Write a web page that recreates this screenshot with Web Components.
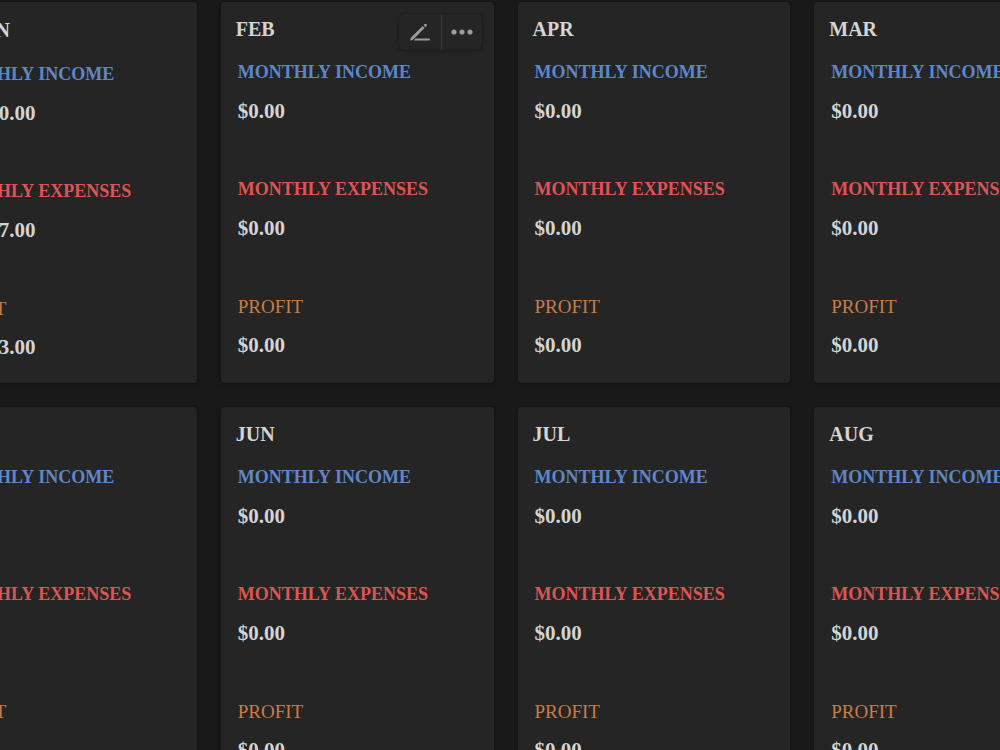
<!DOCTYPE html>
<html lang="en">
<head>
<meta charset="utf-8">
<meta name="viewport" content="width=device-width, initial-scale=1">
<title>Monthly budget</title>
<style>
body {
  margin: 0;
  background: #191919;
  color: #d4d4d4;
  font-family: "Liberation Serif", serif;
}
</style>
</head>
<body>
<budget-board>
  <month-card name="JAN">
    <month-icon slot="icon"></month-icon>
    <month-amount label="MONTHLY INCOME" tone="income">$30,000.00</month-amount>
    <month-amount label="MONTHLY EXPENSES" tone="expenses">$17,007.00</month-amount>
    <month-amount label="PROFIT" tone="profit">$12,993.00</month-amount>
  </month-card>
  <month-card name="FEB">
    <card-actions slot="actions"></card-actions>
    <month-amount label="MONTHLY INCOME" tone="income">$0.00</month-amount>
    <month-amount label="MONTHLY EXPENSES" tone="expenses">$0.00</month-amount>
    <month-amount label="PROFIT" tone="profit">$0.00</month-amount>
  </month-card>
  <month-card name="APR">
    <month-amount label="MONTHLY INCOME" tone="income">$0.00</month-amount>
    <month-amount label="MONTHLY EXPENSES" tone="expenses">$0.00</month-amount>
    <month-amount label="PROFIT" tone="profit">$0.00</month-amount>
  </month-card>
  <month-card name="MAR">
    <month-amount label="MONTHLY INCOME" tone="income">$0.00</month-amount>
    <month-amount label="MONTHLY EXPENSES" tone="expenses">$0.00</month-amount>
    <month-amount label="PROFIT" tone="profit">$0.00</month-amount>
  </month-card>
  <month-card name="MAY">
    <month-amount label="MONTHLY INCOME" tone="income">$0.00</month-amount>
    <month-amount label="MONTHLY EXPENSES" tone="expenses">$0.00</month-amount>
    <month-amount label="PROFIT" tone="profit">$0.00</month-amount>
  </month-card>
  <month-card name="JUN">
    <month-amount label="MONTHLY INCOME" tone="income">$0.00</month-amount>
    <month-amount label="MONTHLY EXPENSES" tone="expenses">$0.00</month-amount>
    <month-amount label="PROFIT" tone="profit">$0.00</month-amount>
  </month-card>
  <month-card name="JUL">
    <month-amount label="MONTHLY INCOME" tone="income">$0.00</month-amount>
    <month-amount label="MONTHLY EXPENSES" tone="expenses">$0.00</month-amount>
    <month-amount label="PROFIT" tone="profit">$0.00</month-amount>
  </month-card>
  <month-card name="AUG">
    <month-amount label="MONTHLY INCOME" tone="income">$0.00</month-amount>
    <month-amount label="MONTHLY EXPENSES" tone="expenses">$0.00</month-amount>
    <month-amount label="PROFIT" tone="profit">$0.00</month-amount>
  </month-card>
</budget-board>

<script>
class BudgetBoard extends HTMLElement {
  constructor() {
    super();
    this.attachShadow({ mode: "open" });
  }

  connectedCallback() {
    this.shadowRoot.innerHTML = `<style>
:host {
  display: block;
  height: 100vh;
  overflow: hidden;
}
/* the gallery is wider than the window on both sides */
.gallery {
  display: grid;
  grid-template-columns: repeat(4, minmax(0, 1fr));
  gap: 24px;
  margin: 2px -87px 0 -76px;
}
</style>
<div class="gallery"><slot></slot></div>`;
  }
}

class MonthCard extends HTMLElement {
  constructor() {
    super();
    this.attachShadow({ mode: "open" });
  }

  connectedCallback() {
    this.shadowRoot.innerHTML = `<style>
:host {
  display: block;
  position: relative;
  box-sizing: border-box;
  padding: 14px 15px 16px;
  background: #252525;
  border-radius: 4px;
  box-shadow: 0 0 0 1px rgba(0, 0, 0, 0.12), 0 2px 4px rgba(0, 0, 0, 0.2);
}
header {
  display: flex;
  align-items: center;
  gap: 8px;
  min-height: 26px;
  margin-bottom: 11px;
}
h2 {
  margin: 0;
  font-size: 20px;
  line-height: 26px;
  font-weight: bold;
}
.amounts {
  display: grid;
  gap: 39px;
  padding: 0 2px;
}
</style>
<header><slot name="icon"></slot><h2>${this.getAttribute("name")}</h2></header>
<slot name="actions"></slot>
<div class="amounts"><slot></slot></div>`;
  }
}

class MonthAmount extends HTMLElement {
  constructor() {
    super();
    this.attachShadow({ mode: "open" });
  }

  connectedCallback() {
    this.shadowRoot.innerHTML = `<style>
:host {
  display: block;
  line-height: 39px;
  white-space: nowrap;
}
.label {
  font-size: 18px;
  font-weight: bold;
}
.value {
  font-size: 21px;
  font-weight: bold;
}
:host([tone="income"]) .label {
  color: #5e87c9;
}
:host([tone="expenses"]) .label {
  color: #df5452;
}
:host([tone="profit"]) .label {
  color: #c77d48;
  font-size: 19px;
  font-weight: normal;
}
</style>
<div class="label">${this.getAttribute("label")}</div>
<div class="value"><slot></slot></div>`;
  }
}

class MonthIcon extends HTMLElement {
  constructor() {
    super();
    this.attachShadow({ mode: "open" });
  }

  connectedCallback() {
    this.shadowRoot.innerHTML = `<style>
:host {
  display: block;
}
svg {
  display: block;
}
</style>
<svg width="24" height="28" viewBox="0 0 24 28" fill="none" stroke="#9b9b9b" stroke-width="2" aria-hidden="true">
  <rect x="3" y="5" width="18" height="18" rx="3"/>
  <path d="M3 11h18M8 3v4M16 3v4"/>
</svg>`;
  }
}

class CardActions extends HTMLElement {
  constructor() {
    super();
    this.attachShadow({ mode: "open" });
  }

  connectedCallback() {
    this.shadowRoot.innerHTML = `<style>
:host {
  display: flex;
  position: absolute;
  top: 12px;
  right: 12px;
  height: 36px;
  background: #252525;
  border-radius: 6px;
  box-shadow: 0 0 0 1px rgba(0, 0, 0, 0.1), 0 1px 5px rgba(0, 0, 0, 0.2);
}
button {
  display: flex;
  align-items: center;
  justify-content: center;
  box-sizing: border-box;
  width: 40px;
  margin: 0;
  padding: 0;
  border: 0;
  background: none;
  color: #9b9b9b;
  cursor: pointer;
}
button:first-of-type {
  width: 43px;
  border-right: 1px solid #383838;
}
</style>
<button type="button" aria-label="Edit">
  <svg width="22" height="20" viewBox="0 0 22 20" fill="currentColor">
    <path d="M1 18.7l.9-3L13.6 4.1l2 2L4 17.7z"/>
    <path d="M14.6 3.2l.9-.9a1.4 1.4 0 0 1 2 2l-.9.9z"/>
    <path d="M6.6 16.4H20a1 1 0 0 1 1 1v.2a1 1 0 0 1-1 1H4.6z"/>
  </svg>
</button>
<button type="button" aria-label="More">
  <svg width="22" height="6" viewBox="0 0 22 6" fill="currentColor">
    <circle cx="3" cy="3" r="2.6"/>
    <circle cx="11" cy="3" r="2.6"/>
    <circle cx="19" cy="3" r="2.6"/>
  </svg>
</button>`;
  }
}

customElements.define("budget-board", BudgetBoard);
customElements.define("month-card", MonthCard);
customElements.define("month-amount", MonthAmount);
customElements.define("month-icon", MonthIcon);
customElements.define("card-actions", CardActions);
</script>
</body>
</html>
